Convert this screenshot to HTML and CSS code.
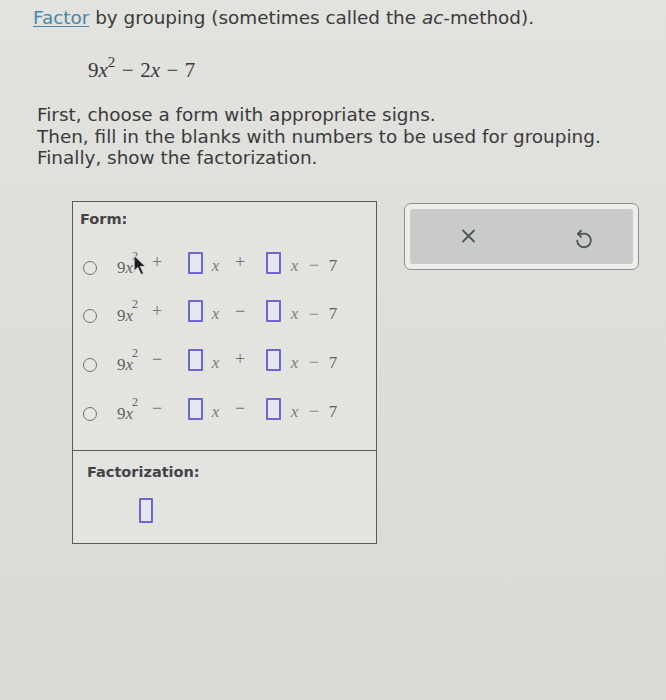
FILE: index.html
```html
<!DOCTYPE html>
<html lang="en">
<head>
<meta charset="utf-8">
<title>Factor by grouping</title>
<link rel="stylesheet" href="styles.css">
</head>
<body>
<div class="page">
  <p class="title"><a class="link" href="#">Factor</a> by grouping (sometimes called the <i>ac</i>-method).</p>
  <p class="expr"><span class="n">9</span><i>x</i><sup>2</sup><span class="op">−</span>2<i>x</i><span class="op">−</span>7</p>
  <div class="instructions">
    <p>First, choose a form with appropriate signs.</p>
    <p>Then, fill in the blanks with numbers to be used for grouping.</p>
    <p>Finally, show the factorization.</p>
  </div>

  <div class="main">
    <div class="card">
      <div class="form-part">
        <div class="label">Form:</div>
        <div class="row">
          <span class="radio"></span><span></span>
          <span class="term">9<i>x</i><sup>2</sup></span><span class="sign">+</span><span></span>
          <span class="blank"></span><span class="var"><i>x</i></span><span class="sign">+</span><span></span>
          <span class="blank"></span><span class="var"><i>x</i></span><span class="sign">−</span><span class="num">7</span>
        </div>
        <div class="row">
          <span class="radio"></span><span></span>
          <span class="term">9<i>x</i><sup>2</sup></span><span class="sign">+</span><span></span>
          <span class="blank"></span><span class="var"><i>x</i></span><span class="sign">−</span><span></span>
          <span class="blank"></span><span class="var"><i>x</i></span><span class="sign">−</span><span class="num">7</span>
        </div>
        <div class="row">
          <span class="radio"></span><span></span>
          <span class="term">9<i>x</i><sup>2</sup></span><span class="sign">−</span><span></span>
          <span class="blank"></span><span class="var"><i>x</i></span><span class="sign">+</span><span></span>
          <span class="blank"></span><span class="var"><i>x</i></span><span class="sign">−</span><span class="num">7</span>
        </div>
        <div class="row">
          <span class="radio"></span><span></span>
          <span class="term">9<i>x</i><sup>2</sup></span><span class="sign">−</span><span></span>
          <span class="blank"></span><span class="var"><i>x</i></span><span class="sign">−</span><span></span>
          <span class="blank"></span><span class="var"><i>x</i></span><span class="sign">−</span><span class="num">7</span>
        </div>
        <svg class="cursor" width="15" height="22" viewBox="0 0 14 20" aria-hidden="true">
          <path d="M1 1 L1 16 L4.5 12.5 L7.5 19 L10 18 L7 11.5 L12 11.5 Z" fill="#1e1e22" stroke="#d8d8d8" stroke-width="1" stroke-linejoin="round"/>
        </svg>
      </div>
      <div class="fact-part">
        <div class="label">Factorization:</div>
        <span class="blank fact-blank"></span>
      </div>
    </div>

    <div class="tools">
      <div class="tools-inner">
        <svg class="icon-x" width="17" height="16" viewBox="0 0 16 16" aria-label="Clear">
          <path d="M2.5 2.5 L13.5 13.5 M13.5 2.5 L2.5 13.5" stroke="#4b5357" stroke-width="1.8" stroke-linecap="round" fill="none"/>
        </svg>
        <svg class="icon-undo" width="21" height="22" viewBox="0 0 18 20" aria-label="Undo">
          <path d="M4.2 12.5 A6.2 6.2 0 1 0 9 6.2 L5 6.2" stroke="#4b5357" stroke-width="1.7" stroke-linecap="round" fill="none"/>
          <path d="M7.6 3.4 L4.8 6.2 L7.6 9" stroke="#4b5357" stroke-width="1.7" stroke-linecap="round" stroke-linejoin="round" fill="none"/>
        </svg>
      </div>
    </div>
  </div>
</div>
</body>
</html>
```

FILE: styles.css
```css
html, body {
  margin: 0;
  padding: 0;
}

body {
  width: 666px;
  height: 700px;
  overflow: hidden;
  background: linear-gradient(180deg, #e2e2de 0%, #dddeda 50%, #d9dad6 100%);
  font-family: "DejaVu Sans", Verdana, sans-serif;
  color: #3a3a3c;
}

.page {
  padding: 7px 0 0 33px;
  position: relative;
}

p {
  margin: 0;
}

.title {
  font-size: 18.4px;
  line-height: 22px;
}

.link {
  color: #4a86a6;
  text-decoration: underline;
  text-underline-offset: 2px;
}

.expr {
  margin: 29px 0 0 55px;
  font-family: "Liberation Serif", "Times New Roman", serif;
  font-size: 21px;
  line-height: 24px;
  color: #38383a;
}

.expr sup {
  font-size: 15px;
  vertical-align: 10px;
  line-height: 0;
}

.expr .op {
  margin: 0 6.5px;
}

.instructions {
  margin: 22px 0 0 4px;
  font-size: 18.4px;
  line-height: 21.5px;
}

.main {
  display: flex;
  align-items: flex-start;
  margin: 32px 0 0 39px;
  gap: 27px;
}

.card {
  width: 303px;
  border: 1.5px solid #5a5a5e;
  background: #e3e3df;
}

.form-part {
  position: relative;
  padding: 7px 0 17px 10px;
  border-bottom: 1.5px solid #5a5a5e;
}

.label {
  font-weight: bold;
  font-size: 14.5px;
  line-height: 20px;
  color: #444448;
  margin-left: -3px;
}

.row {
  display: grid;
  grid-template-columns: 15px 19px 31px 18px 22px 15px 25px 24px 14px 15px 27px 12px 26px;
  align-items: center;
  height: 48.6px;
  font-family: "Liberation Serif", "Times New Roman", serif;
  font-size: 17px;
  color: #626264;
}

.form-part .label + .row {
  margin-top: 10px;
}

.radio {
  width: 12px;
  height: 12px;
  border: 1.5px solid #707074;
  border-radius: 50%;
  margin-top: 10px;
  background: #e6e6e2;
}

.term {
  position: relative;
  top: 4px;
  white-space: nowrap;
}

.term sup {
  font-size: 12px;
  line-height: 0;
  vertical-align: 13px;
  margin-left: -1px;
}

.sign {
  text-align: center;
  color: #747476;
  font-size: 18px;
}

.var {
  text-align: center;
  position: relative;
  top: 3px;
  color: #7c7c7e;
}

.num {
  text-align: center;
  position: relative;
  top: 3px;
}

.row .sign:nth-child(12) {
  position: relative;
  top: 3px;
  color: #8a8a8c;
}

.blank {
  display: block;
  width: 11px;
  height: 18px;
  border: 2px solid #6a68d0;
  background: #e6e6ee;
  border-radius: 1px;
}

.cursor {
  position: absolute;
  left: 60px;
  top: 52px;
}

.fact-part {
  padding: 11px 0 20px 14px;
}

.fact-part .label {
  margin-left: 0;
}

.fact-blank {
  margin: 16px 0 0 52px;
  width: 10px;
  height: 21px;
}

.tools {
  margin-top: 2px;
  width: 223px;
  padding: 5px;
  border: 1.5px solid #8c8e90;
  border-radius: 7px;
  background: #ededeb;
}

.tools-inner {
  height: 55px;
  background: #c9cbc9;
  border-radius: 3px;
  display: flex;
  align-items: center;
  padding-left: 50px;
  gap: 95px;
}

.icon-undo {
  margin-top: 3px;
}
```
